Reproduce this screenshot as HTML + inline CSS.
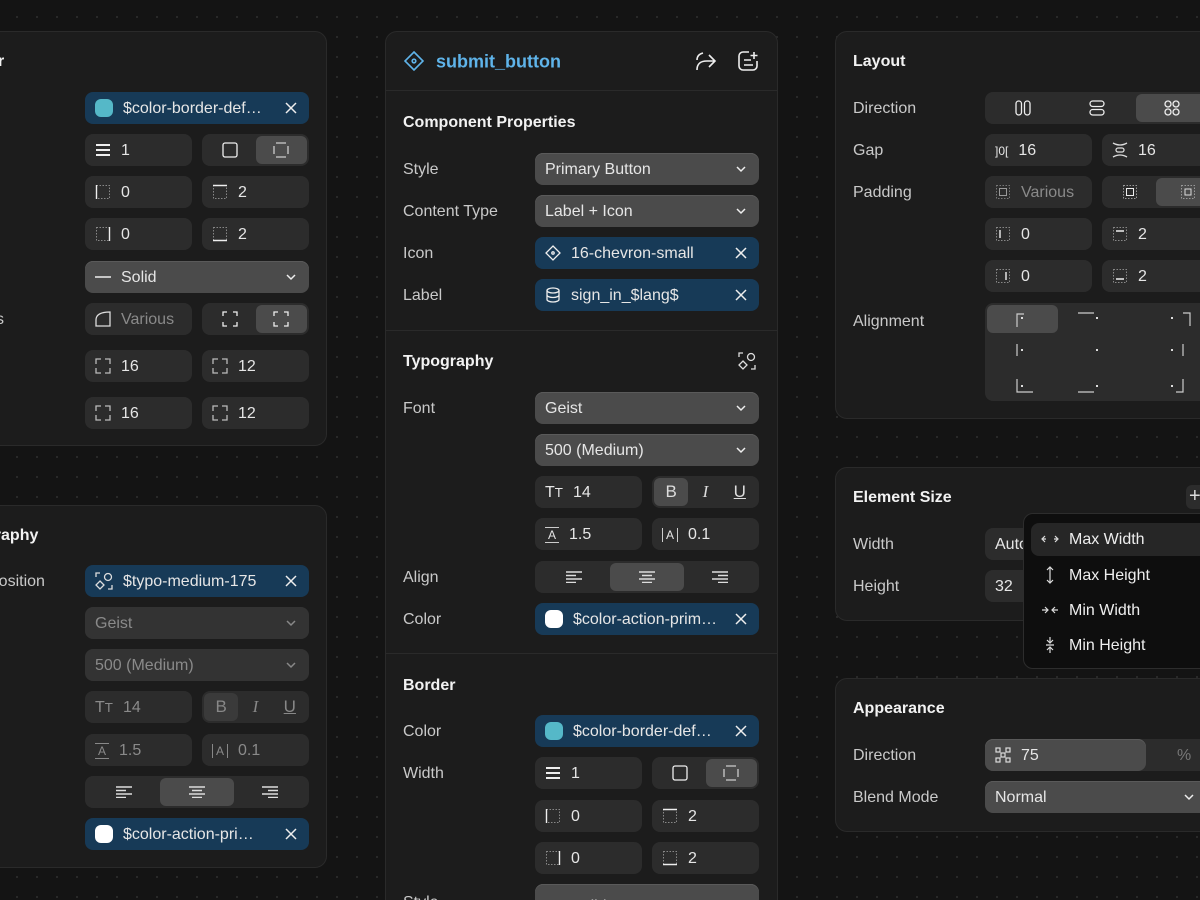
<!DOCTYPE html>
<html><head><meta charset="utf-8"><style>
*{box-sizing:border-box;margin:0;padding:0}
html{width:1200px;height:900px;overflow:hidden}
body{width:1200px;height:900px;overflow:hidden;background:#141414;background-image:radial-gradient(circle,#2b2b2b 1px,transparent 1.2px);background-size:20px 20px;background-position:7px 7px;font-family:"Liberation Sans",sans-serif;position:relative;color:#e6e6e6}
.p{position:absolute;background:#1c1c1c;border:1px solid #2a2a2a;border-radius:12px;overflow:hidden}
.a{position:absolute}
.t{position:absolute;font-size:16px;font-weight:bold;color:#f2f2f2;transform:translateY(-45%);white-space:nowrap}
.l{position:absolute;font-size:16px;color:#c9c9c9;transform:translateY(-45%);white-space:nowrap}
.c{position:absolute;height:32px;border-radius:8px;background:#2c2c2c;display:flex;align-items:center;padding-left:10px;font-size:16px;color:#e6e6e6;white-space:nowrap;overflow:hidden}
.c>span{position:relative;top:1px}
.c svg{flex:none}
.c .v{margin-left:10px}
.d{background:#4b4b4b;box-shadow:inset 0 1px 0 #5a5a5a}
.k{background:#173a57}
.dim{color:#8a8a8a}
.dd{background:#333;color:#8a8a8a}
.r{position:absolute;right:12px;top:10px}
.sg{position:absolute;height:32px;border-radius:8px;background:#2c2c2c;display:flex;padding:2px}
.sg div{flex:1;display:flex;align-items:center;justify-content:center;border-radius:6px;font-size:17px;color:#ddd}
.sg .on{background:#4b4b4b}
.sw{width:18px;height:18px;border-radius:6px}
.hr{position:absolute;left:0;right:0;height:1px;background:#2a2a2a}
</style></head><body>

<!-- LEFT TOP -->
<div class="p" style="left:-20px;top:31px;width:347px;height:415px"></div>
<div class="t" style="left:-2px;top:61px">r</div>
<div class="l" style="left:-4px;top:319px">s</div>
<div class="c k" style="left:85px;top:92px;width:224px"><div class="sw" style="background:#55b8c8"></div><span class="v">$color-border-def…</span><svg class="r" width="12" height="12"><path d="M1 1l10 10M11 1L1 11" stroke="#eee" stroke-width="1.5"/></svg></div>
<div class="c" style="left:85px;top:134px;width:107px"><svg width="16" height="14"><path d="M1 2h14M1 7h14M1 12h14" stroke="#eee" stroke-width="2"/></svg><span class="v">1</span></div>
<div class="sg" style="left:202px;top:134px;width:107px"><div><svg width="16" height="16"><rect x="1" y="1" width="14" height="14" rx="2" fill="none" stroke="#eee" stroke-width="1.3"/></svg></div><div class="on"><svg width="16" height="16"><path d="M3 1h10M3 15h10M1 4v8M15 4v8" stroke="#ccc" stroke-width="1.3"/></svg></div></div>
<div class="c" style="left:85px;top:176px;width:107px"><svg width="16" height="16"><rect x="1.5" y="1.5" width="13" height="13" fill="none" stroke="#888" stroke-dasharray="1.5 1.5"/><path d="M1.5 1v14" stroke="#eee" stroke-width="1.4"/></svg><span class="v">0</span></div>
<div class="c" style="left:202px;top:176px;width:107px"><svg width="16" height="16"><rect x="1.5" y="1.5" width="13" height="13" fill="none" stroke="#888" stroke-dasharray="1.5 1.5"/><path d="M1 1.5h14" stroke="#eee" stroke-width="1.4"/></svg><span class="v">2</span></div>
<div class="c" style="left:85px;top:218px;width:107px"><svg width="16" height="16"><rect x="1.5" y="1.5" width="13" height="13" fill="none" stroke="#888" stroke-dasharray="1.5 1.5"/><path d="M14.5 1v14" stroke="#eee" stroke-width="1.4"/></svg><span class="v">0</span></div>
<div class="c" style="left:202px;top:218px;width:107px"><svg width="16" height="16"><rect x="1.5" y="1.5" width="13" height="13" fill="none" stroke="#888" stroke-dasharray="1.5 1.5"/><path d="M1 14.5h14" stroke="#eee" stroke-width="1.4"/></svg><span class="v">2</span></div>
<div class="c d" style="left:85px;top:261px;width:224px"><svg width="16" height="4"><path d="M0 2h16" stroke="#eee" stroke-width="1.5"/></svg><span class="v">Solid</span><svg class="r" width="12" height="12"><path d="M2 4l4 4 4-4" stroke="#eee" fill="none" stroke-width="1.5"/></svg></div>
<div class="c dim" style="left:85px;top:303px;width:107px"><svg width="16" height="16"><path d="M1 15V9Q1 1 15 1v14z" fill="none" stroke="#ddd" stroke-width="1.3"/></svg><span class="v">Various</span></div>
<div class="sg" style="left:202px;top:303px;width:107px"><div><svg width="16" height="16" fill="none" stroke="#eee" stroke-width="1.3"><path d="M1 5V1h4M11 1h4v4M15 11v4h-4M5 15H1v-4"/></svg></div><div class="on"><svg width="16" height="16" fill="none" stroke="#eee" stroke-width="1.3"><path d="M1 5V1h4M11 1h4v4M15 11v4h-4M5 15H1v-4"/></svg></div></div>
<div class="c" style="left:85px;top:350px;width:107px"><svg width="16" height="16" fill="none" stroke="#bbb" stroke-width="1.3"><path d="M1 6V1h5M10 1h5v5M15 10v5h-5M6 15H1v-5"/></svg><span class="v">16</span></div>
<div class="c" style="left:202px;top:350px;width:107px"><svg width="16" height="16" fill="none" stroke="#bbb" stroke-width="1.3"><path d="M1 6V1h5M10 1h5v5M15 10v5h-5M6 15H1v-5"/></svg><span class="v">12</span></div>
<div class="c" style="left:85px;top:397px;width:107px"><svg width="16" height="16" fill="none" stroke="#bbb" stroke-width="1.3"><path d="M1 6V1h5M10 1h5v5M15 10v5h-5M6 15H1v-5"/></svg><span class="v">16</span></div>
<div class="c" style="left:202px;top:397px;width:107px"><svg width="16" height="16" fill="none" stroke="#bbb" stroke-width="1.3"><path d="M1 6V1h5M10 1h5v5M15 10v5h-5M6 15H1v-5"/></svg><span class="v">12</span></div>

<!-- LEFT BOTTOM -->
<div class="p" style="left:-20px;top:505px;width:347px;height:363px"></div>
<div class="t" style="left:-52px;top:535px">Typography</div>
<div class="l" style="left:-44px;top:581px">Composition</div>
<div class="c k" style="left:85px;top:565px;width:224px"><svg width="18" height="18" fill="none" stroke="#ddd" stroke-width="1.3"><path d="M1 5V1h4M17 13v4h-4"/><circle cx="13" cy="5" r="3.5"/><path d="M5 9l4 4-4 4-4-4z"/></svg><span class="v">$typo-medium-175</span><svg class="r" width="12" height="12"><path d="M1 1l10 10M11 1L1 11" stroke="#eee" stroke-width="1.5"/></svg></div>
<div class="c dd" style="left:85px;top:607px;width:224px"><span>Geist</span><svg class="r" width="12" height="12"><path d="M2 4l4 4 4-4" stroke="#888" fill="none" stroke-width="1.5"/></svg></div>
<div class="c dd" style="left:85px;top:649px;width:224px"><span>500 (Medium)</span><svg class="r" width="12" height="12"><path d="M2 4l4 4 4-4" stroke="#888" fill="none" stroke-width="1.5"/></svg></div>
<div class="c dim" style="left:85px;top:691px;width:107px"><span>T<small>T</small></span><span class="v">14</span></div>
<div class="sg" style="left:202px;top:691px;width:107px;color:#888"><div class="on" style="background:#3a3a3a;color:#888">B</div><div style="color:#888;font-style:italic;font-family:'Liberation Serif'">I</div><div style="color:#888;text-decoration:underline">U</div></div>
<div class="c dim" style="left:85px;top:734px;width:107px"><span style="font-size:12px;border-bottom:1px solid #888;border-top:1px solid #888;padding:0 3px">A</span><span class="v">1.5</span></div>
<div class="c dim" style="left:202px;top:734px;width:107px"><span style="font-size:12px;border-left:1px solid #888;border-right:1px solid #888;padding:0 3px">A</span><span class="v">0.1</span></div>
<div class="sg" style="left:85px;top:776px;width:224px"><div><svg width="16" height="12" stroke="#ddd" stroke-width="1.4"><path d="M0 1h16M0 4.5h10M0 8h16M0 11.5h10"/></svg></div><div class="on"><svg width="16" height="12" stroke="#ddd" stroke-width="1.4"><path d="M0 1h16M3 4.5h10M0 8h16M3 11.5h10"/></svg></div><div><svg width="16" height="12" stroke="#ddd" stroke-width="1.4"><path d="M0 1h16M6 4.5h10M0 8h16M6 11.5h10"/></svg></div></div>
<div class="c k" style="left:85px;top:818px;width:224px"><div class="sw" style="background:#fff"></div><span class="v">$color-action-pri…</span><svg class="r" width="12" height="12"><path d="M1 1l10 10M11 1L1 11" stroke="#eee" stroke-width="1.5"/></svg></div>

<!-- CENTER -->
<div class="p" style="left:385px;top:31px;width:393px;height:900px">
<div class="hr" style="top:58px"></div><div class="hr" style="top:298px"></div><div class="hr" style="top:621px"></div></div>
<svg class="a" style="left:404px;top:51px" width="20" height="20" fill="none" stroke="#5fb4ea" stroke-width="1.6"><path d="M10 1l9 9-9 9-9-9z"/><circle cx="10" cy="10" r="1.8"/></svg>
<div class="t" style="left:436px;top:61px;font-size:18px;color:#5fb4ea">submit_button</div>
<svg class="a" style="left:695px;top:50px" width="22" height="22" fill="none" stroke="#eee" stroke-width="1.6"><path d="M2 20c0-6 3-9 10-9h7M14 5l6 6-6 6"/><path d="M2 10c0-4 2-6 6-7"/></svg>
<svg class="a" style="left:737px;top:50px" width="22" height="22" fill="none" stroke="#eee" stroke-width="1.6"><path d="M12 2H6a4 4 0 0 0-4 4v10a4 4 0 0 0 4 4h10a4 4 0 0 0 4-4v-5M7 10h7M7 15h9M17 2v7M13.5 5.5h7"/></svg>
<div class="t" style="left:403px;top:122px">Component Properties</div>
<div class="l" style="left:403px;top:169px">Style</div>
<div class="l" style="left:403px;top:211px">Content Type</div>
<div class="l" style="left:403px;top:253px">Icon</div>
<div class="l" style="left:403px;top:295px">Label</div>
<div class="c d" style="left:535px;top:153px;width:224px"><span>Primary Button</span><svg class="r" width="12" height="12"><path d="M2 4l4 4 4-4" stroke="#eee" fill="none" stroke-width="1.5"/></svg></div>
<div class="c d" style="left:535px;top:195px;width:224px"><span>Label + Icon</span><svg class="r" width="12" height="12"><path d="M2 4l4 4 4-4" stroke="#eee" fill="none" stroke-width="1.5"/></svg></div>
<div class="c k" style="left:535px;top:237px;width:224px"><svg width="16" height="16" fill="none" stroke="#eee" stroke-width="1.3"><path d="M8 1l7 7-7 7-7-7z"/><circle cx="8" cy="8" r="1.2"/></svg><span class="v">16-chevron-small</span><svg class="r" width="12" height="12"><path d="M1 1l10 10M11 1L1 11" stroke="#eee" stroke-width="1.5"/></svg></div>
<div class="c k" style="left:535px;top:279px;width:224px"><svg width="16" height="16" fill="none" stroke="#eee" stroke-width="1.3"><ellipse cx="8" cy="3.5" rx="6" ry="2.5"/><path d="M2 3.5v9c0 1.4 2.7 2.5 6 2.5s6-1.1 6-2.5v-9M2 8c0 1.4 2.7 2.5 6 2.5S14 9.4 14 8"/></svg><span class="v">sign_in_$lang$</span><svg class="r" width="12" height="12"><path d="M1 1l10 10M11 1L1 11" stroke="#eee" stroke-width="1.5"/></svg></div>
<div class="t" style="left:403px;top:361px">Typography</div>
<svg class="a" style="left:738px;top:352px" width="18" height="18" fill="none" stroke="#ddd" stroke-width="1.3"><path d="M1 5V1h4M17 13v4h-4"/><circle cx="13" cy="5" r="3.5"/><path d="M5 9l4 4-4 4-4-4z"/></svg>
<div class="l" style="left:403px;top:408px">Font</div>
<div class="l" style="left:403px;top:577px">Align</div>
<div class="l" style="left:403px;top:619px">Color</div>
<div class="c d" style="left:535px;top:392px;width:224px"><span>Geist</span><svg class="r" width="12" height="12"><path d="M2 4l4 4 4-4" stroke="#eee" fill="none" stroke-width="1.5"/></svg></div>
<div class="c d" style="left:535px;top:434px;width:224px"><span>500 (Medium)</span><svg class="r" width="12" height="12"><path d="M2 4l4 4 4-4" stroke="#eee" fill="none" stroke-width="1.5"/></svg></div>
<div class="c" style="left:535px;top:476px;width:107px"><span>T<small>T</small></span><span class="v">14</span></div>
<div class="sg" style="left:652px;top:476px;width:107px"><div class="on">B</div><div style="font-style:italic;font-family:'Liberation Serif'">I</div><div style="text-decoration:underline">U</div></div>
<div class="c" style="left:535px;top:518px;width:107px"><span style="font-size:12px;border-bottom:1px solid #ccc;border-top:1px solid #ccc;padding:0 3px">A</span><span class="v">1.5</span></div>
<div class="c" style="left:652px;top:518px;width:107px"><span style="font-size:12px;border-left:1px solid #ccc;border-right:1px solid #ccc;padding:0 3px">A</span><span class="v">0.1</span></div>
<div class="sg" style="left:535px;top:561px;width:224px"><div><svg width="16" height="12" stroke="#ddd" stroke-width="1.4"><path d="M0 1h16M0 4.5h10M0 8h16M0 11.5h10"/></svg></div><div class="on"><svg width="16" height="12" stroke="#ddd" stroke-width="1.4"><path d="M0 1h16M3 4.5h10M0 8h16M3 11.5h10"/></svg></div><div><svg width="16" height="12" stroke="#ddd" stroke-width="1.4"><path d="M0 1h16M6 4.5h10M0 8h16M6 11.5h10"/></svg></div></div>
<div class="c k" style="left:535px;top:603px;width:224px"><div class="sw" style="background:#fff"></div><span class="v">$color-action-prim…</span><svg class="r" width="12" height="12"><path d="M1 1l10 10M11 1L1 11" stroke="#eee" stroke-width="1.5"/></svg></div>
<div class="t" style="left:403px;top:685px">Border</div>
<div class="l" style="left:403px;top:731px">Color</div>
<div class="l" style="left:403px;top:773px">Width</div>
<div class="l" style="left:403px;top:902px">Style</div>
<div class="c k" style="left:535px;top:715px;width:224px"><div class="sw" style="background:#55b8c8"></div><span class="v">$color-border-def…</span><svg class="r" width="12" height="12"><path d="M1 1l10 10M11 1L1 11" stroke="#eee" stroke-width="1.5"/></svg></div>
<div class="c" style="left:535px;top:757px;width:107px"><svg width="16" height="14"><path d="M1 2h14M1 7h14M1 12h14" stroke="#eee" stroke-width="2"/></svg><span class="v">1</span></div>
<div class="sg" style="left:652px;top:757px;width:107px"><div><svg width="16" height="16"><rect x="1" y="1" width="14" height="14" rx="2" fill="none" stroke="#eee" stroke-width="1.3"/></svg></div><div class="on"><svg width="16" height="16"><path d="M3 1h10M3 15h10M1 4v8M15 4v8" stroke="#ccc" stroke-width="1.3"/></svg></div></div>
<div class="c" style="left:535px;top:800px;width:107px"><svg width="16" height="16"><rect x="1.5" y="1.5" width="13" height="13" fill="none" stroke="#888" stroke-dasharray="1.5 1.5"/><path d="M1.5 1v14" stroke="#eee" stroke-width="1.4"/></svg><span class="v">0</span></div>
<div class="c" style="left:652px;top:800px;width:107px"><svg width="16" height="16"><rect x="1.5" y="1.5" width="13" height="13" fill="none" stroke="#888" stroke-dasharray="1.5 1.5"/><path d="M1 1.5h14" stroke="#eee" stroke-width="1.4"/></svg><span class="v">2</span></div>
<div class="c" style="left:535px;top:842px;width:107px"><svg width="16" height="16"><rect x="1.5" y="1.5" width="13" height="13" fill="none" stroke="#888" stroke-dasharray="1.5 1.5"/><path d="M14.5 1v14" stroke="#eee" stroke-width="1.4"/></svg><span class="v">0</span></div>
<div class="c" style="left:652px;top:842px;width:107px"><svg width="16" height="16"><rect x="1.5" y="1.5" width="13" height="13" fill="none" stroke="#888" stroke-dasharray="1.5 1.5"/><path d="M1 14.5h14" stroke="#eee" stroke-width="1.4"/></svg><span class="v">2</span></div>
<div class="c d" style="left:535px;top:884px;width:224px;padding-left:36px"><span style="margin-top:12px">Solid</span></div>

<!-- RIGHT TOP -->
<div class="p" style="left:835px;top:31px;width:400px;height:388px"></div>
<div class="t" style="left:853px;top:61px">Layout</div>
<div class="l" style="left:853px;top:108px">Direction</div>
<div class="l" style="left:853px;top:150px">Gap</div>
<div class="l" style="left:853px;top:192px">Padding</div>
<div class="l" style="left:853px;top:321px">Alignment</div>
<div class="a" style="left:985px;top:92px;width:250px;height:32px;background:#2c2c2c;border-radius:8px"></div>
<div class="a" style="left:1136px;top:94px;width:90px;height:28px;background:#4b4b4b;border-radius:6px"></div>
<svg class="a" style="left:1015px;top:100px" width="16" height="16" fill="none" stroke="#eee" stroke-width="1.3"><rect x="1" y="1" width="5.5" height="14" rx="2.7"/><rect x="9.5" y="1" width="5.5" height="14" rx="2.7"/></svg>
<svg class="a" style="left:1089px;top:100px" width="16" height="16" fill="none" stroke="#eee" stroke-width="1.3"><rect x="1" y="1" width="14" height="5.5" rx="2.7"/><rect x="1" y="9.5" width="14" height="5.5" rx="2.7"/></svg>
<svg class="a" style="left:1164px;top:100px" width="16" height="16" fill="none" stroke="#eee" stroke-width="1.3"><circle cx="4" cy="4" r="3"/><circle cx="12" cy="4" r="3"/><circle cx="4" cy="12" r="3"/><circle cx="12" cy="12" r="3"/></svg>
<div class="c" style="left:985px;top:134px;width:107px"><span style="font-size:12px">]0[</span><span class="v">16</span></div>
<div class="c" style="left:1102px;top:134px;width:120px"><svg width="16" height="16" fill="none" stroke="#ddd" stroke-width="1.3"><path d="M1 1q7 4 14 0M1 15q7-4 14 0"/><rect x="4" y="6" width="8" height="4" rx="2"/></svg><span class="v">16</span></div>
<div class="c dim" style="left:985px;top:176px;width:107px"><svg width="16" height="16" fill="none"><rect x="1.5" y="1.5" width="13" height="13" stroke="#777" stroke-dasharray="1.5 1.5"/><rect x="4.5" y="4.5" width="7" height="7" stroke="#999"/></svg><span class="v">Various</span></div>
<div class="sg" style="left:1102px;top:176px;width:120px"><div style="flex:0 0 52px"><svg width="16" height="16" fill="none"><rect x="1.5" y="1.5" width="13" height="13" stroke="#999" stroke-dasharray="1.5 1.5"/><rect x="4.5" y="4.5" width="7" height="7" stroke="#eee"/></svg></div><div class="on"><svg width="16" height="16" fill="none"><rect x="1.5" y="1.5" width="13" height="13" stroke="#999" stroke-dasharray="1.5 1.5"/><rect x="5" y="5" width="6" height="6" stroke="#ddd"/></svg></div></div>
<div class="c" style="left:985px;top:218px;width:107px"><svg width="16" height="16"><rect x="1.5" y="1.5" width="13" height="13" fill="none" stroke="#888" stroke-dasharray="1.5 1.5"/><path d="M5 4v8" stroke="#eee" stroke-width="1.4"/></svg><span class="v">0</span></div>
<div class="c" style="left:1102px;top:218px;width:120px"><svg width="16" height="16"><rect x="1.5" y="1.5" width="13" height="13" fill="none" stroke="#888" stroke-dasharray="1.5 1.5"/><path d="M4 5h8" stroke="#eee" stroke-width="1.4"/></svg><span class="v">2</span></div>
<div class="c" style="left:985px;top:260px;width:107px"><svg width="16" height="16"><rect x="1.5" y="1.5" width="13" height="13" fill="none" stroke="#888" stroke-dasharray="1.5 1.5"/><path d="M11 4v8" stroke="#eee" stroke-width="1.4"/></svg><span class="v">0</span></div>
<div class="c" style="left:1102px;top:260px;width:120px"><svg width="16" height="16"><rect x="1.5" y="1.5" width="13" height="13" fill="none" stroke="#888" stroke-dasharray="1.5 1.5"/><path d="M4 11h8" stroke="#eee" stroke-width="1.4"/></svg><span class="v">2</span></div>
<div class="a" style="left:985px;top:303px;width:240px;height:98px;background:#2c2c2c;border-radius:8px"></div>
<div class="a" style="left:987px;top:305px;width:71px;height:28px;background:#4b4b4b;border-radius:6px"></div>
<svg class="a" style="left:985px;top:303px" width="215" height="98" fill="none" stroke="#ccc" stroke-width="1.2">
<path d="M32 24V11h7M93 10h16M198 10h7v13M32 41v12M198 41v12M32 76v13h16M93 89h16M198 76v13h-7"/>
<g fill="#ddd" stroke="none"><rect x="36" y="14" width="2" height="2"/><rect x="111" y="14" width="2" height="2"/><rect x="186" y="14" width="2" height="2"/><rect x="36" y="46" width="2" height="2"/><rect x="111" y="46" width="2" height="2"/><rect x="186" y="46" width="2" height="2"/><rect x="36" y="82" width="2" height="2"/><rect x="111" y="82" width="2" height="2"/><rect x="186" y="82" width="2" height="2"/></g></svg>

<!-- ELEMENT SIZE -->
<div class="p" style="left:835px;top:467px;width:400px;height:154px"></div>
<div class="t" style="left:853px;top:497px">Element Size</div>
<div class="a" style="left:1186px;top:485px;width:30px;height:24px;background:#2c2c2c;border-radius:6px;color:#ddd;font-size:20px;line-height:22px;padding-left:3px">+</div>
<div class="l" style="left:853px;top:544px">Width</div>
<div class="l" style="left:853px;top:586px">Height</div>
<div class="c" style="left:985px;top:528px;width:100px"><span>Auto</span></div>
<div class="c" style="left:985px;top:570px;width:100px"><span>32</span></div>
<div class="a" style="left:1023px;top:513px;width:200px;height:156px;background:#0e0e0e;border:1px solid #2d2d2d;border-radius:10px"></div>
<div class="a" style="left:1031px;top:523px;width:180px;height:33px;background:#262626;border-radius:8px"></div>
<svg class="a" style="left:1041px;top:531px" width="18" height="16" fill="none" stroke="#ddd" stroke-width="1.2"><path d="M4 5L1 8l3 3M14 5l3 3-3 3M2 8h3M13 8h3"/></svg>
<svg class="a" style="left:1042px;top:566px" width="16" height="18" fill="none" stroke="#ddd" stroke-width="1.2"><path d="M5 4l3-3 3 3M5 14l3 3 3-3M8 1v16"/></svg>
<svg class="a" style="left:1041px;top:602px" width="18" height="16" fill="none" stroke="#ddd" stroke-width="1.2"><path d="M4 5l3 3-3 3M14 5l-3 3 3 3M1 8h6M11 8h6"/></svg>
<svg class="a" style="left:1042px;top:636px" width="16" height="18" fill="none" stroke="#ddd" stroke-width="1.2"><path d="M5 4l3 3 3-3M5 14l3-3 3 3M8 1v6M8 11v6M4 9h8"/></svg>
<div class="l" style="left:1069px;top:539px;color:#eee">Max Width</div>
<div class="l" style="left:1069px;top:575px;color:#eee">Max Height</div>
<div class="l" style="left:1069px;top:610px;color:#eee">Min Width</div>
<div class="l" style="left:1069px;top:645px;color:#eee">Min Height</div>

<!-- APPEARANCE -->
<div class="p" style="left:835px;top:678px;width:400px;height:154px"></div>
<div class="t" style="left:853px;top:708px">Appearance</div>
<div class="l" style="left:853px;top:755px">Direction</div>
<div class="l" style="left:853px;top:797px">Blend Mode</div>
<div class="a" style="left:985px;top:739px;width:240px;height:32px;background:#2c2c2c;border-radius:8px"></div>
<div class="l" style="left:1177px;top:755px;color:#777">%</div>
<div class="c d" style="left:985px;top:739px;width:161px"><svg width="16" height="16" fill="none" stroke="#ddd" stroke-width="1.2"><rect x="1" y="1" width="4" height="4"/><rect x="11" y="1" width="4" height="4"/><rect x="1" y="11" width="4" height="4"/><rect x="11" y="11" width="4" height="4"/><rect x="6" y="6" width="4" height="4"/></svg><span class="v">75</span></div>
<div class="c d" style="left:985px;top:781px;width:224px"><span>Normal</span><svg class="a" style="left:198px;top:10px" width="12" height="12"><path d="M2 4l4 4 4-4" stroke="#eee" fill="none" stroke-width="1.5"/></svg></div>
</body></html>
